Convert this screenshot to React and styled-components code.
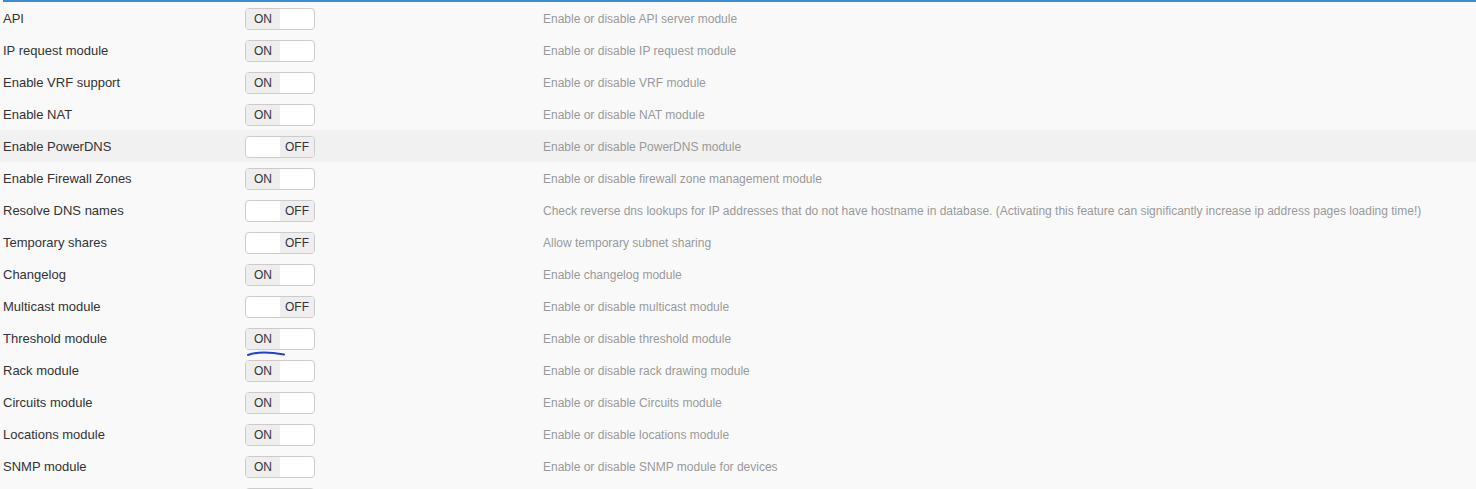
import React from 'react'
import styled, { createGlobalStyle } from 'styled-components'

const Global = createGlobalStyle`
  html, body {
    margin: 0;
    padding: 0;
    background: #f9f9f9;
    font-family: "Liberation Sans", Arial, sans-serif;
    overflow: hidden;
  }
`

const Page = styled.div`
  position: relative;
`

const TopLine = styled.div`
  height: 2px;
  margin-left: 3px;
  background: #3a8ad8;
`

const Row = styled.div`
  display: grid;
  grid-template-columns: 245px 298px 1fr;
  align-items: center;
  height: 32px;
  background: ${p => (p.$hover ? '#f1f1f1' : 'transparent')};
`

const Label = styled.div`
  padding-left: 3px;
  font-size: 13px;
  color: #333;
  white-space: nowrap;
`

const Desc = styled.div`
  padding-top: 2px;
  font-size: 12px;
  color: #999;
  white-space: nowrap;
`

const Switch = styled.div`
  display: flex;
  margin-top: 2px;
  width: 68px;
  height: 20px;
  border: 1px solid #ccc;
  border-radius: 4px;
  overflow: hidden;
  background: #fff;
  flex-direction: ${p => (p.$on ? 'row' : 'row-reverse')};
`

const Half = styled.span`
  width: 34px;
  background: #eee;
  color: #333;
  font-size: 12px;
  line-height: 20px;
  text-align: center;
`

const Mark = styled.svg`
  position: absolute;
  left: 246px;
  top: 350px;
`

const rows = [
  ['API', true, 'Enable or disable API server module'],
  ['IP request module', true, 'Enable or disable IP request module'],
  ['Enable VRF support', true, 'Enable or disable VRF module'],
  ['Enable NAT', true, 'Enable or disable NAT module'],
  ['Enable PowerDNS', false, 'Enable or disable PowerDNS module', true],
  ['Enable Firewall Zones', true, 'Enable or disable firewall zone management module'],
  ['Resolve DNS names', false, 'Check reverse dns lookups for IP addresses that do not have hostname in database. (Activating this feature can significantly increase ip address pages loading time!)'],
  ['Temporary shares', false, 'Allow temporary subnet sharing'],
  ['Changelog', true, 'Enable changelog module'],
  ['Multicast module', false, 'Enable or disable multicast module'],
  ['Threshold module', true, 'Enable or disable threshold module'],
  ['Rack module', true, 'Enable or disable rack drawing module'],
  ['Circuits module', true, 'Enable or disable Circuits module'],
  ['Locations module', true, 'Enable or disable locations module'],
  ['SNMP module', true, 'Enable or disable SNMP module for devices'],
  ['', true, '', false, true],
]

export default function App() {
  return (
    <Page>
      <Global />
      <TopLine />
      {rows.map(([label, on, desc, hover, blank], i) => (
        <Row key={i} $hover={hover}>
          <Label>{label}</Label>
          <div>
            <Switch $on={on}>
              <Half>{blank ? '' : on ? 'ON' : 'OFF'}</Half>
            </Switch>
          </div>
          <Desc>{desc}</Desc>
        </Row>
      ))}
      <Mark width="42" height="8" viewBox="0 0 42 8">
        <path d="M2 5 C 10 2, 24 2, 38 4.5" stroke="#1f3fd8" strokeWidth="2" fill="none" strokeLinecap="round" />
      </Mark>
    </Page>
  )
}
